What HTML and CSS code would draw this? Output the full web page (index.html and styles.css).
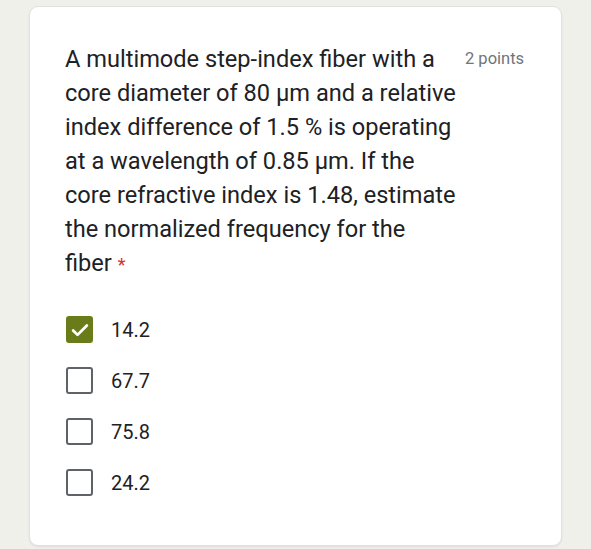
FILE: index.html
```html
<!DOCTYPE html>
<html>
<head>
<meta charset="utf-8">
<link rel="stylesheet" href="styles.css">
</head>
<body>
<div class="card">
  <div class="head">
    <div class="question">A multimode step-index fiber with a<br>core diameter of 80 µm and a relative<br>index difference of 1.5 % is operating<br>at a wavelength of 0.85 µm. If the<br>core refractive index is 1.48, estimate<br>the normalized frequency for the<br>fiber <span class="req">*</span></div>
    <div class="points">2 points</div>
  </div>
  <div class="options">
    <div class="opt">
      <span class="box checked"><svg viewBox="0 0 24 24" width="22" height="22"><path d="M4.5 12.5l4.8 4.8L19.5 7" fill="none" stroke="#fff" stroke-width="3" stroke-linecap="round" stroke-linejoin="round"/></svg></span>
      <span class="label">14.2</span>
    </div>
    <div class="opt"><span class="box"></span><span class="label">67.7</span></div>
    <div class="opt"><span class="box"></span><span class="label">75.8</span></div>
    <div class="opt"><span class="box"></span><span class="label">24.2</span></div>
  </div>
</div>
</body>
</html>
```
FILE: styles.css
```css
html, body {
  margin: 0;
  padding: 0;
}
body {
  background: #f0f0ea;
  font-family: Roboto, "Liberation Sans", sans-serif;
  color: #202124;
  width: 591px;
  height: 549px;
  overflow: hidden;
}
.card {
  box-sizing: border-box;
  margin: 6px 0 0 29px;
  width: 533px;
  height: 540px;
  background: #fff;
  border: 1px solid #e2e2dc;
  border-radius: 9px;
  box-shadow: 0 1px 2px rgba(0,0,0,0.08);
  padding: 35px 0 0 35px;
}
.head {
  display: flex;
  align-items: flex-start;
}
.question {
  flex: 0 0 400px;
  font-size: 23.6px;
  line-height: 34px;
  white-space: nowrap;
}
.req {
  color: #d93025;
  font-size: 18px;
}
.points {
  flex: none;
  font-size: 16.5px;
  line-height: 34px;
  color: #70757a;
}
.options {
  display: flex;
  flex-direction: column;
  gap: 24px;
  margin-top: 34px;
}
.opt {
  display: flex;
  align-items: center;
  height: 27px;
}
.box {
  box-sizing: border-box;
  width: 27px;
  height: 27px;
  border: 2.5px solid #5f6368;
  border-radius: 3px;
  margin-left: 1px;
  display: flex;
  align-items: center;
  justify-content: center;
}
.box.checked {
  background: #687c1a;
  border-color: #687c1a;
}
.label {
  margin-left: 18px;
  font-size: 20px;
  color: #202124;
}
```
